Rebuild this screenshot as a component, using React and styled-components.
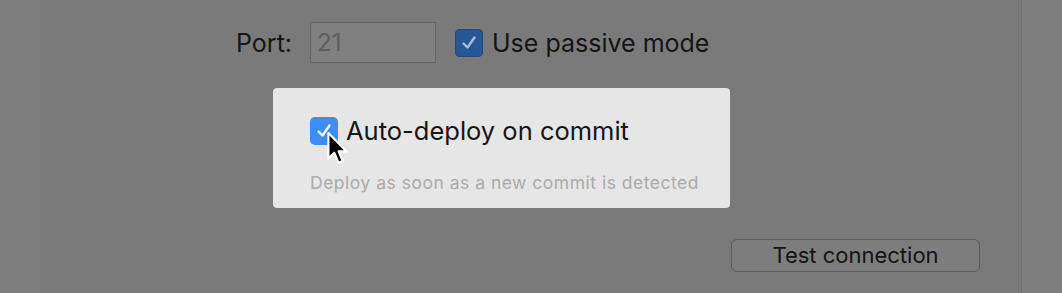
import React from 'react';
import styled, { createGlobalStyle } from 'styled-components';

const GlobalStyle = createGlobalStyle`
  html, body {
    margin: 0;
    padding: 0;
    background: #7a7a7a;
  }
  body {
    font-family: Inter, "Open Sans", "Liberation Sans", sans-serif;
    -webkit-font-smoothing: antialiased;
  }
`;

const Check = ({ color }) => (
  <svg width="20" height="20" viewBox="0 0 20 20">
    <path d="M4.5 10.5 L8.5 14.5 L15.5 4.5" fill="none" stroke={color} strokeWidth="2.4" strokeLinecap="round" strokeLinejoin="round" />
  </svg>
);

const Cursor = () => (
  <svg width="26" height="36" viewBox="0 0 24 34">
    <path
      d="M2 2 L2 26 L7.5 20.5 L11.5 30 L15.5 28.3 L11.6 19.2 L19 19.2 Z"
      fill="#000"
      stroke="#fff"
      strokeWidth="2"
      strokeLinejoin="round"
    />
  </svg>
);

export default function App() {
  return (
    <>
      <GlobalStyle />
      <Window>
        <SideStrip />
        <Main>
          <PortRow>
            <Label>Port:</Label>
            <PortInput>21</PortInput>
            <Checkbox dim>
              <Check color="#a9bcd4" />
            </Checkbox>
            <CheckLabel>Use passive mode</CheckLabel>
          </PortRow>

          <Callout>
            <CalloutRow>
              <Checkbox>
                <Check color="#ffffff" />
                <CursorWrap>
                  <Cursor />
                </CursorWrap>
              </Checkbox>
              <CalloutLabel>Auto-deploy on commit</CalloutLabel>
            </CalloutRow>
            <Hint>Deploy as soon as a new commit is detected</Hint>
          </Callout>

          <ButtonRow>
            <Button>Test connection</Button>
          </ButtonRow>
        </Main>
        <Divider />
        <SideStrip />
      </Window>
    </>
  );
}

// Styles

const Window = styled.div`
  display: flex;
  width: 1062px;
  height: 293px;
  overflow: hidden;
`;

const SideStrip = styled.div`
  width: 40px;
  flex-shrink: 0;
  background: #7f7f7f;
`;

const Divider = styled.div`
  width: 1px;
  background: #737373;
`;

const Main = styled.div`
  flex: 1;
  background: #7a7a7a;
  display: flex;
  flex-direction: column;
  padding-top: 22px;
`;

const PortRow = styled.div`
  display: flex;
  align-items: center;
  height: 41px;
  padding-left: 196px;
`;

const Label = styled.span`
  font-size: 25px;
  color: #161616;
  margin-right: 18px;
`;

const PortInput = styled.div`
  box-sizing: border-box;
  width: 126px;
  height: 41px;
  border: 1px solid #666;
  background: #808080;
  color: #5f5f5f;
  font-size: 24px;
  line-height: 39px;
  padding-left: 6px;
  margin-right: 19px;
`;

const Checkbox = styled.div`
  position: relative;
  width: 28px;
  height: 28px;
  border-radius: 5px;
  background: ${p => (p.dim ? '#27599433' : '#3a8ef6')};
  background: ${p => (p.dim ? '#275894' : '#3a8ef6')};
  box-shadow: ${p => (p.dim ? 'inset 0 0 0 1px #1f4a7a' : 'none')};
  display: flex;
  align-items: center;
  justify-content: center;
  flex-shrink: 0;
`;

const CheckLabel = styled.span`
  font-size: 25px;
  color: #141414;
  margin-left: 9px;
`;

const Callout = styled.div`
  box-sizing: border-box;
  margin-top: 25px;
  margin-left: 233px;
  width: 457px;
  height: 120px;
  background: #e6e6e6;
  border-radius: 4px;
  padding: 27px 0 0 37px;
`;

const CalloutRow = styled.div`
  display: flex;
  align-items: center;
`;

const CursorWrap = styled.div`
  position: absolute;
  left: 16px;
  top: 14px;
  line-height: 0;
`;

const CalloutLabel = styled.span`
  font-size: 25.5px;
  color: #141414;
  margin-left: 8px;
`;

const Hint = styled.div`
  margin-top: 26px;
  font-size: 17.5px;
  letter-spacing: 0.5px;
  color: #acacac;
`;

const ButtonRow = styled.div`
  display: flex;
  justify-content: flex-end;
  padding-right: 41px;
  margin-top: 31px;
`;

const Button = styled.div`
  box-sizing: border-box;
  width: 249px;
  height: 33px;
  border: 1px solid #5e5e5e;
  border-radius: 6px;
  background: #7d7d7d;
  color: #141414;
  font-size: 22px;
  line-height: 31px;
  text-align: center;
`;
